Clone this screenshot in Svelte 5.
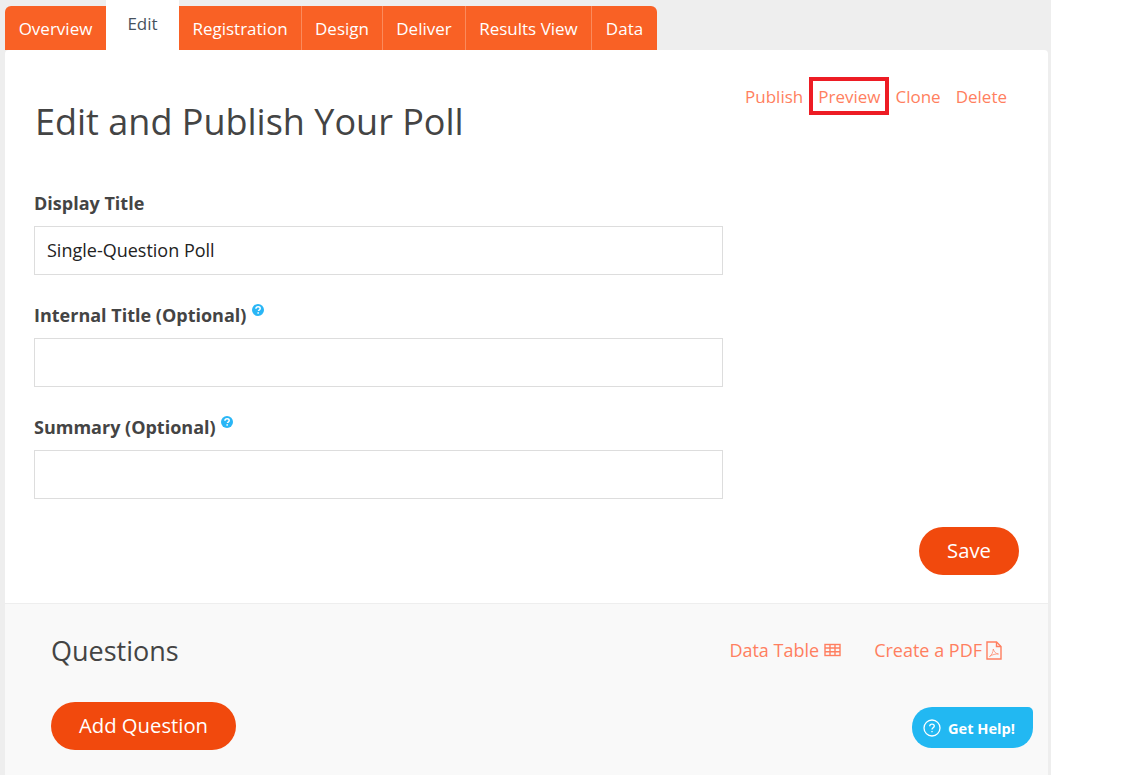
<script>
  const tabs = [
    { label: 'Overview', width: 101 },
    { label: 'Edit', width: 73, active: true },
    { label: 'Registration', width: 123 },
    { label: 'Design', width: 81 },
    { label: 'Deliver', width: 83 },
    { label: 'Results View', width: 126 },
    { label: 'Data', width: 65 }
  ];
  const actions = ['Publish', 'Preview', 'Clone', 'Delete'];
</script>

<div class="page">
  <nav class="tabs">
    {#each tabs as tab}
      <a class="tab" class:active={tab.active} style="width: {tab.width}px">{tab.label}</a>
    {/each}
  </nav>

  <main class="card">
    <section class="top">
      <div class="actions">
        {#each actions as action}
          <a class="action" class:boxed={action === 'Preview'}>{action}</a>
        {/each}
      </div>
      <h1>Edit and Publish Your Poll</h1>

      <div class="field first">
        <label>Display Title</label>
        <div class="input">Single-Question Poll</div>
      </div>
      <div class="field">
        <label>Internal Title (Optional)
          <svg class="hint" viewBox="0 0 12 12"><circle cx="6" cy="6" r="6" /><path d="M3.9 4.7c.1-1.3 1-1.9 2.2-1.9 1.2 0 2.1.7 2.1 1.7 0 .8-.4 1.2-1.1 1.6-.5.3-.6.5-.6 1" /><rect x="5.4" y="8.2" width="1.5" height="1.5" /></svg>
        </label>
        <div class="input"></div>
      </div>
      <div class="field">
        <label>Summary (Optional)
          <svg class="hint" viewBox="0 0 12 12"><circle cx="6" cy="6" r="6" /><path d="M3.9 4.7c.1-1.3 1-1.9 2.2-1.9 1.2 0 2.1.7 2.1 1.7 0 .8-.4 1.2-1.1 1.6-.5.3-.6.5-.6 1" /><rect x="5.4" y="8.2" width="1.5" height="1.5" /></svg>
        </label>
        <div class="input"></div>
      </div>

      <div class="save-row">
        <button class="pill save">Save</button>
      </div>
    </section>

    <section class="questions">
      <div class="q-head">
        <h2>Questions</h2>
        <div class="q-links">
          <a class="q-link">Data Table
            <svg class="icon" width="17" height="14" viewBox="0 0 17 14"><rect x="1" y="1.500" width="15" height="11" /><path d="M1 5h15M1 8.800h15M6 1.500v11M11 1.500v11" /></svg>
          </a>
          <a class="q-link pdf">Create a PDF
            <svg class="icon" width="16" height="19" viewBox="0 0 16 19"><path d="M1 1h9.500L15 5.500V18H1z" /><path d="M10.500 1v4.500H15" /><path class="thin" d="M3.500 15.500c2-1 3.500-4 3.800-7.500.8 3 2.300 4.500 5.200 5-2.800-.2-6.200.5-9 2.500z" /></svg>
          </a>
        </div>
      </div>
      <button class="pill add">Add Question</button>
    </section>
  </main>

  <button class="help">
    <svg width="18" height="18" viewBox="0 0 18 18"><circle cx="9" cy="9" r="8" /><path d="M6.700 7.200c.1-1.300 1-2 2.300-2 1.300 0 2.300.8 2.300 1.900 0 1.800-2.300 1.700-2.300 3.500" /><path d="M9 12v1.300" /></svg>
    <span>Get Help!</span>
  </button>
</div>

<style>
  :global(body) {
    margin: 0;
    background: #fff;
    overflow: hidden;
  }

  .page {
    position: relative;
    box-sizing: border-box;
    width: 1051px;
    height: 775px;
    padding: 0 3px 0 5px;
    background: #eee;
    font-family: 'Open Sans', sans-serif;
    color: #444;
  }

  .tabs {
    display: flex;
    align-items: flex-end;
    height: 50px;
  }

  .tab {
    box-sizing: border-box;
    height: 44px;
    line-height: 46px;
    text-align: center;
    font-size: 17px;
    color: #fff;
    background: #f96125;
    border-right: 1px solid #fb8a5c;
  }

  .tab:first-child {
    border-top-left-radius: 6px;
    border-right: none;
  }

  .tab:last-child {
    border-top-right-radius: 6px;
    border-right: none;
  }

  .tab.active {
    height: 50px;
    line-height: 48px;
    color: #47525d;
    background: #fff;
    border-right: none;
  }

  .card {
    height: 725px;
    background: #fff;
    border-radius: 4px 4px 0 0;
    overflow: hidden;
  }

  .top {
    position: relative;
    height: 554px;
    box-sizing: border-box;
    padding: 47px 0 0 30px;
    border-bottom: 1px solid #eee;
  }

  .actions {
    position: absolute;
    top: 36px;
    right: 41px;
    display: flex;
    font-size: 17px;
    line-height: 22px;
    color: #ff7f60;
  }

  .action {
    margin-left: 15px;
  }

  .boxed {
    position: relative;
  }

  .boxed::after {
    content: '';
    position: absolute;
    left: -9px;
    right: -9px;
    top: -9px;
    bottom: -7px;
    border: 4px solid #ed1c24;
  }

  h1 {
    margin: 0;
    font-size: 36px;
    font-weight: 400;
    line-height: 50px;
    color: #444;
  }

  .field {
    margin-top: 28px;
    width: 689px;
    margin-left: -1px;
  }

  .field.first {
    margin-top: 44px;
  }

  label {
    display: block;
    height: 35px;
    font-size: 18px;
    font-weight: 700;
    line-height: 24px;
    color: #444;
  }

  .hint {
    width: 12px;
    height: 12px;
    margin-left: 1px;
    vertical-align: 6px;
  }

  .hint circle {
    fill: #29b6f6;
  }

  .hint rect {
    fill: #fff;
  }

  .hint path {
    fill: none;
    stroke: #fff;
    stroke-width: 1.500;
  }

  .input {
    box-sizing: border-box;
    height: 49px;
    padding-left: 12px;
    border: 1px solid #ddd;
    font-size: 18px;
    line-height: 47px;
    color: #222;
  }

  .save-row {
    display: flex;
    justify-content: flex-end;
    margin: 28px 29px 0 0;
  }

  .pill {
    border: none;
    border-radius: 24px;
    background: #f1490d;
    color: #fff;
    font-family: inherit;
    font-size: 20.250px;
    height: 48px;
    padding: 0 0 2px;
  }

  .save {
    width: 100px;
  }

  .questions {
    height: 171px;
    box-sizing: border-box;
    padding: 26px 46px 0 46px;
    background: #f9f9f9;
  }

  .q-head {
    display: flex;
    align-items: center;
    justify-content: space-between;
    height: 40px;
  }

  h2 {
    margin: 0;
    font-size: 27px;
    font-weight: 400;
    color: #444;
  }

  .q-links {
    display: flex;
    font-size: 18px;
    color: #ff7f60;
  }

  .q-link {
    display: flex;
    align-items: center;
    gap: 4px;
  }

  .q-link:first-child {
    gap: 5px;
  }

  .pdf {
    margin-left: 33px;
  }

  .icon {
    fill: none;
    stroke: #ff7f60;
    stroke-width: 1.400;
  }

  .icon .thin {
    stroke-width: 0.700;
  }

  .add {
    display: block;
    width: 185px;
    margin: 32px 0 0 0;
  }

  .help {
    position: absolute;
    left: 912px;
    top: 707px;
    display: flex;
    align-items: center;
    gap: 7px;
    width: 121px;
    height: 41px;
    box-sizing: border-box;
    padding: 0 0 0 11px;
    border: none;
    border-radius: 20px 5px 20px 20px;
    background: #22b8f2;
    color: #fff;
    font-family: inherit;
    font-size: 14.600px;
    font-weight: 700;
  }

  .help svg {
    fill: none;
    stroke: #fff;
    stroke-width: 1.300;
  }
</style>
